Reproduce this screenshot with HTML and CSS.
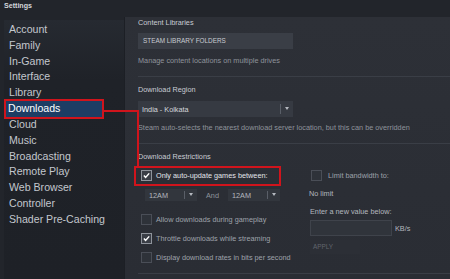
FILE: index.html
```html
<!DOCTYPE html>
<html lang="en">
<head>
    <meta charset="UTF-8">
    <title>Settings</title>
    <link rel="stylesheet" href="styles.css">
</head>
<body>
<div class="window">
    <div class="titlebar">Settings</div>
    <div class="frame">
        <!--left menu-->
        <ul class="sidebar">
            <li>Account</li>
            <li>Family</li>
            <li>In-Game</li>
            <li>Interface</li>
            <li>Library</li>
            <li class="active">Downloads</li>
            <li>Cloud</li>
            <li>Music</li>
            <li>Broadcasting</li>
            <li>Remote Play</li>
            <li>Web Browser</li>
            <li>Controller</li>
            <li>Shader Pre-Caching</li>
        </ul>
        <!--settings page-->
        <div class="main">
            <div class="section first">
                <div class="heading">Content Libraries</div>
                <div class="button">STEAM LIBRARY FOLDERS</div>
                <div class="desc">Manage content locations on multiple drives</div>
            </div>
            <div class="section">
                <div class="heading">Download Region</div>
                <div class="select wide">
                    <span class="value">India - Kolkata</span>
                    <span class="arrow"></span>
                </div>
                <div class="desc">Steam auto-selects the nearest download server location, but this can be overridden</div>
            </div>
            <div class="section">
                <div class="heading">Download Restrictions</div>
                <div class="cols">
                    <div class="col-left">
                        <div class="checkrow bright">
                            <span class="check on"><svg viewBox="0 0 11 11"><path d="M2.3 5.6 L4.4 7.8 L8.8 2.9" /></svg></span>
                            Only auto-update games between:
                        </div>
                        <div class="timerow">
                            <div class="select time">
                                <span class="value">12AM</span>
                                <span class="arrow"></span>
                            </div>
                            <span class="and">And</span>
                            <div class="select time">
                                <span class="value">12AM</span>
                                <span class="arrow"></span>
                            </div>
                        </div>
                        <div class="checkrow gap">
                            <span class="check"></span>
                            Allow downloads during gameplay
                        </div>
                        <div class="checkrow">
                            <span class="check on"><svg viewBox="0 0 11 11"><path d="M2.3 5.6 L4.4 7.8 L8.8 2.9" /></svg></span>
                            Throttle downloads while streaming
                        </div>
                        <div class="checkrow">
                            <span class="check"></span>
                            Display download rates in bits per second
                        </div>
                    </div>
                    <div class="col-right">
                        <div class="checkrow wide-gap">
                            <span class="check"></span>
                            Limit bandwidth to:
                        </div>
                        <div class="label nolimit">No limit</div>
                        <div class="label">Enter a new value below:</div>
                        <div class="inputrow">
                            <span class="input"></span>
                            <span class="unit">KB/s</span>
                        </div>
                        <div class="apply">APPLY</div>
                    </div>
                </div>
            </div>
        </div>
    </div>
    <!--red annotation marks-->
    <div class="mark box1"></div>
    <div class="mark line-h"></div>
    <div class="mark line-v"></div>
    <div class="mark box2"></div>
</div>
</body>
</html>
```

FILE: styles.css
```css
*{
    margin: 0px;
    padding: 0px;
    box-sizing: border-box;
}
body
{
    background-color: #22252b;
    font-family: "Liberation Sans", Arial, sans-serif;
    width: 450px;
    height: 279px;
    overflow: hidden;
}
.window
{
    position: relative;
    width: 450px;
    height: 279px;
    background-color: #22252b;
}
.titlebar
{
    height: 17px;
    padding-left: 4px;
    padding-top: 2px;
    font-size: 7.1px;
    line-height: 8px;
    font-weight: bold;
    color: #d4d7dc;
}
.frame
{
    display: flex;
    height: 262px;
}
.sidebar
{
    list-style: none;
    width: 120px;
    margin-left: 4px;
    margin-top: 3px;
    padding-top: 2px;
    background: linear-gradient(#262a31, #1f2228 60px, #1e2127);
}
.sidebar li
{
    height: 15.83px;
    line-height: 15.83px;
    padding-left: 4px;
    width: 97px;
    margin-left: 1px;
    font-size: 10.6px;
    white-space: nowrap;
    color: #c3c7ce;
}
.sidebar li.active
{
    background-color: #1d3d64;
    color: #ffffff;
    padding-left: 3px;
}
.main
{
    flex: 1;
    background: linear-gradient(#2d3037, #2a2d34);
    border-left: 1px solid #1c1f25;
    padding-left: 13px;
    font-size: 7.3px;
    color: #b9bdc5;
}
.section
{
    padding-top: 8px;
    padding-bottom: 10px;
    border-bottom: 1px solid #3a3e46;
}
.section.first
{
    padding-top: 1px;
}
.heading
{
    line-height: 10px;
    color: #c8ccd3;
}
.button
{
    margin-top: 5px;
    width: 155px;
    height: 16px;
    line-height: 16px;
    padding-left: 5px;
    background-color: #3a3e46;
    font-size: 6.4px;
    color: #c9ccd2;
}
.desc
{
    margin-top: 7px;
    line-height: 10px;
    color: #8e939b;
}
.select
{
    display: flex;
    align-items: center;
    height: 16px;
    background-color: #363a42;
    color: #d4d7dc;
}
.select.wide
{
    margin-top: 6px;
    width: 155px;
}
.select.wide + .desc
{
    margin-top: 6px;
}
.select .value
{
    flex: 1;
    padding-left: 4px;
}
.select .arrow
{
    width: 13px;
    height: 10px;
    border-left: 1px solid #5a5f68;
    position: relative;
}
.select .arrow::after
{
    content: "";
    position: absolute;
    left: 4px;
    top: 3px;
    border-left: 2.5px solid transparent;
    border-right: 2.5px solid transparent;
    border-top: 3px solid #b5b9c0;
}
.cols
{
    display: flex;
}
.col-left
{
    width: 171px;
    padding-left: 3px;
}
.col-right
{
    flex: 1;
}
.checkrow
{
    display: flex;
    align-items: center;
    height: 12px;
    margin-top: 7px;
    color: #9ea2aa;
}
.checkrow.bright
{
    color: #e2e5ea;
}
.checkrow.gap
{
    margin-top: 12px;
}
.check
{
    width: 11px;
    height: 11px;
    margin-right: 4px;
    border: 1px solid #4a4e57;
    background-color: #2e3239;
}
.check.on
{
    border-color: #8e939b;
    background-color: #3a3e46;
}
.check svg
{
    display: block;
    width: 9px;
    height: 9px;
}
.check svg path
{
    fill: none;
    stroke: #ffffff;
    stroke-width: 1.8;
}
.timerow
{
    display: flex;
    align-items: center;
    margin-top: 8px;
    margin-left: 4px;
}
.select.time
{
    width: 52px;
    height: 12px;
    background-color: #32363d;
    color: #b3b7be;
}
.select.time .arrow
{
    height: 8px;
}
.select.time .arrow::after
{
    top: 2px;
}
.and
{
    width: 31px;
    text-align: center;
    color: #8e939b;
}
.col-right .checkrow
{
    margin-left: 2px;
}
.checkrow.wide-gap .check
{
    margin-right: 6px;
}
.label
{
    line-height: 10px;
    margin-top: 8px;
    margin-left: 1px;
    color: #b3b7be;
}
.label.nolimit
{
    margin-left: 0px;
}
.inputrow
{
    display: flex;
    align-items: center;
    margin-top: 3px;
    margin-left: 1px;
}
.input
{
    width: 82px;
    height: 16px;
    background-color: #30343b;
    border: 1px solid #3f434b;
}
.unit
{
    margin-left: 3px;
    color: #b3b7be;
}
.apply
{
    margin-top: 4px;
    margin-left: 1px;
    width: 50px;
    height: 14px;
    line-height: 14px;
    padding-left: 3px;
    font-size: 6.4px;
    background-color: #2c2f36;
    color: #61656d;
}
.mark
{
    position: absolute;
    border: 2px solid #d0141c;
}
.box1
{
    left: 4px;
    top: 99px;
    width: 100px;
    height: 20px;
}
.line-h
{
    left: 103px;
    top: 110px;
    width: 36px;
    height: 2px;
    border: none;
    background-color: #d0141c;
}
.line-v
{
    left: 137px;
    top: 110px;
    width: 2px;
    height: 57px;
    border: none;
    background-color: #d0141c;
}
.box2
{
    left: 134px;
    top: 166px;
    width: 147px;
    height: 20px;
}
```
